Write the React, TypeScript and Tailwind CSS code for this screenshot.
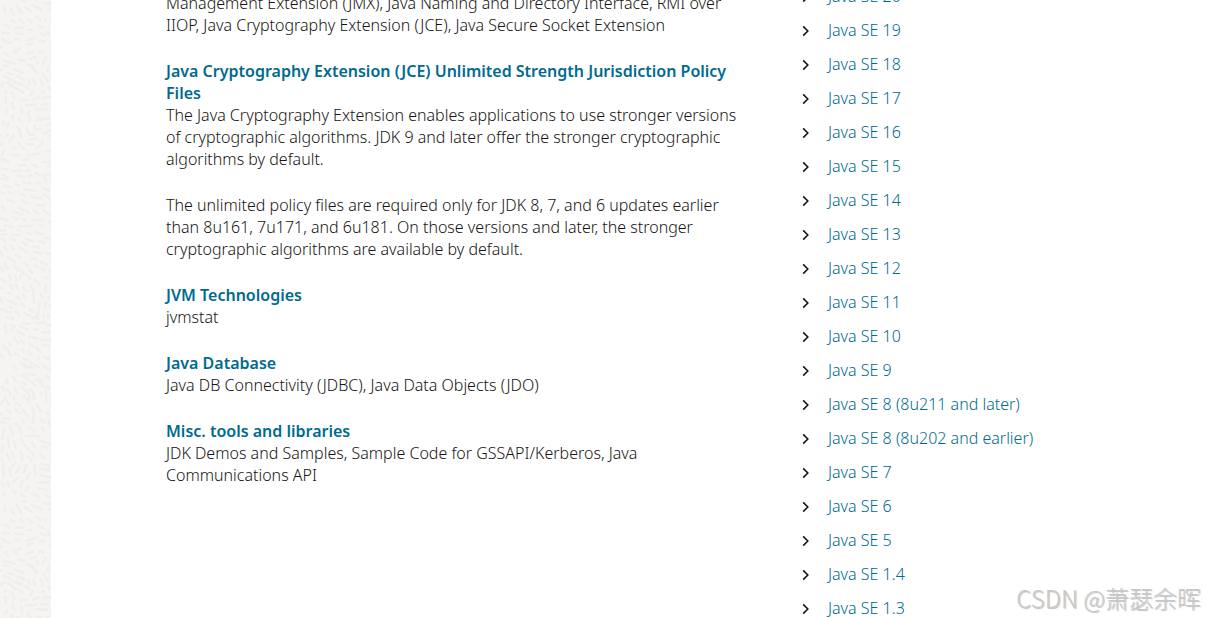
import React from "react";

type Topic = { title?: string; paragraphs: string[] };

const topics: Topic[] = [
  {
    paragraphs: [
      "Management Extension (JMX), Java Naming and Directory Interface, RMI over IIOP, Java Cryptography Extension (JCE), Java Secure Socket Extension",
    ],
  },
  {
    title: "Java Cryptography Extension (JCE) Unlimited Strength Jurisdiction Policy Files",
    paragraphs: [
      "The Java Cryptography Extension enables applications to use stronger versions of cryptographic algorithms. JDK 9 and later offer the stronger cryptographic algorithms by default.",
      "The unlimited policy files are required only for JDK 8, 7, and 6 updates earlier than 8u161, 7u171, and 6u181. On those versions and later, the stronger cryptographic algorithms are available by default.",
    ],
  },
  { title: "JVM Technologies", paragraphs: ["jvmstat"] },
  {
    title: "Java Database",
    paragraphs: ["Java DB Connectivity (JDBC), Java Data Objects (JDO)"],
  },
  {
    title: "Misc. tools and libraries",
    paragraphs: [
      "JDK Demos and Samples, Sample Code for GSSAPI/Kerberos, Java Communications API",
    ],
  },
];

const releases = [
  "20", "19", "18", "17", "16", "15", "14", "13", "12", "11", "10", "9",
  "8 (8u211 and later)", "8 (8u202 and earlier)", "7", "6", "5", "1.4", "1.3",
];

// One tile of the margin texture, drawn at three units per pixel.
const strokes = [
  "M14 16L15 40M32 24L42 45M49 12L66 42M62 0L80 5M72 20L95 35M92 13L128 30M108 0L115 2M130 10L153 11M145 22L150 32",
  "M30 60L46 67M58 56L72 70M84 56L98 70M108 48L124 62M132 55L138 64M10 73L30 81M0 70L2 76M44 84L72 83M114 76L132 86M142 92L150 106",
  "M80 90L98 89M6 98L30 100M44 101L72 102M120 101Q134 103 140 108M4 114Q14 128 36 129M42 117L62 120M78 124L110 112M116 122L136 125M80 135L100 129M150 130L153 140",
  "M64 144L42 152Q40 158 52 160M76 162Q88 156 104 157M114 154L134 157M12 156L26 168M0 136L6 146M52 176Q62 183 78 182M88 177L110 170M112 182L114 196M138 170L127 196",
  "M8 182Q24 184 48 193M10 196L28 198M78 192Q96 196 108 220M92 192L114 220M40 208L72 220M145 198L141 216M0 208L8 212M20 218L42 224M128 218L144 244M8 226L36 240M50 228L76 240",
  "M84 236L90 256M100 236L106 260M122 234L128 260M38 244L70 256M4 248Q30 246 42 264Q62 268 72 280M74 258L90 268M0 252L10 262M17 268L18 278M100 268L90 290M122 278L136 272M144 258L150 268M32 274Q40 284 44 298",
  "M16 288L18 312M60 302L82 298M96 300L120 290M128 296Q138 290 153 292M38 304Q36 320 44 330M74 316L112 314M122 315L146 311M62 318Q68 330 66 344M22 326L16 344M90 332L80 350M106 328L144 329M112 354L124 348",
  "M36 342L40 362M54 350Q58 364 68 368M92 346L86 366M104 362L150 354M14 362L8 376M28 366L18 388M108 376Q98 382 106 388L126 386M138 376L153 372M48 376Q62 390 62 416M82 382Q80 400 90 404L106 403M130 402L153 388M0 402L4 410",
  "M26 400L18 410M42 404L26 428M84 418L114 416M144 408L153 407M8 424L2 440M54 426Q62 444 76 446M76 432L102 434M130 420Q122 438 106 446M36 440L50 448M16 446L4 468M32 464L60 466M80 466L120 460M136 456L153 452M64 478L88 478M0 478L18 479",
  "M8 482L28 484M54 496L80 495M92 493L116 502M128 484L150 488M2 505L26 510M36 513L68 513M76 512L92 512M142 500L153 495M102 518L124 528M6 522Q14 528 28 536M50 526L76 532M84 530L98 526M134 522L153 523",
  "M0 535L24 540M8 554L36 564M44 550L60 558M68 546L98 552M106 546L124 550M132 524L138 548M70 568L110 572M124 562L150 572M36 584L24 574M60 580L78 590M128 580L150 595M90 590L126 596M0 578L16 582",
  "M4 616L15 632M18 598L46 608M64 600L84 612M54 622L92 640M98 628L116 644M110 615L138 617M128 628L152 648M34 634L70 644M2 654L26 664M34 650L56 658M94 660L132 661M66 660L80 658M144 664L153 668",
  "M12 676L42 681M56 679L98 677M116 672L132 680M0 691L18 691M50 691L64 690M0 704L22 704M34 704L62 706M76 698L98 704M102 696L134 704M2 712L18 728M30 716L48 722M74 716L102 724M114 722L138 730M134 714L153 716",
  "M62 724L84 736M28 734L44 750M98 738L120 742M10 738L22 750M54 740L84 758M0 752L10 770M100 754L126 762M136 760L153 760M44 762L66 776M20 770L48 786M92 774L114 778M120 784L144 796M12 790L24 808M70 786L86 800",
  "M38 796L58 814M100 794L116 802M122 806L136 812M0 800L14 814M62 808L74 826M86 806L98 822M146 808L153 820M28 820L32 842M44 824L50 844M62 824L60 838M78 822L94 840M0 836L20 848M100 838L122 854M132 830L146 836",
  "M30 850L38 870M46 850L56 870M66 860L82 876M92 854Q104 880 102 912M136 850L138 880M0 862L10 866M22 878L36 884M68 880L76 894M44 888L64 896M120 878L130 896M148 886L144 900M0 890L8 910M20 900L50 914M62 910L76 920",
  "M118 906Q120 930 108 956M136 904L136 930M28 918L38 926M146 918L153 920M0 926L36 940M86 926L102 938M46 932L60 950M70 938L90 948M146 944L142 956M132 940L130 954M16 953L44 956M94 952L118 956M66 970L92 972M106 970L138 968",
  "M14 974L20 1002M28 974L48 982M56 976L86 992M140 978L153 974M98 989L118 989M36 984L36 996M46 992L76 1006M124 998L150 996M84 1010L116 1016M122 1022L153 1018M40 1010L56 1032M24 1024L32 1038M60 1018L74 1034M124 1035L148 1036M84 1028L100 1042",
  "M8 1034L16 1046M20 1044L34 1070M66 1046L72 1058M108 1040L124 1060M42 1060L60 1068M84 1050L94 1068M0 1060L10 1076M68 1074L84 1082M112 1070L118 1080M130 1072L150 1078",
  "M36 1094L50 1108M60 1088L84 1108M66 1092L102 1106M90 1088L120 1102M126 1094L153 1112M74 1122L108 1124M20 1134L22 1152M38 1128L48 1146M64 1124L88 1142M104 1138L132 1140M136 1122L148 1138M62 1144L78 1156M92 1142L108 1160",
  "M4 1156L14 1174M22 1166L34 1190M42 1162L52 1180M62 1160L82 1178M88 1164L104 1184M114 1138L130 1160M136 1156L150 1170M12 1184L20 1202M44 1186L40 1202M68 1186L84 1202M82 1168L90 1202M96 1182L106 1200M118 1176L128 1184M136 1168L140 1204",
  "M10 1196L4 1216M20 1202L30 1218M44 1206L64 1218M82 1202L90 1214M108 1212L124 1238M94 1218L102 1236M18 1230L36 1238M44 1224L62 1244M66 1226L84 1252M0 1236L6 1248M102 1230L98 1272M138 1234L146 1248M8 1256L32 1256M64 1256L74 1270",
  "M118 1252L136 1272M0 1266L20 1270M48 1268L52 1280M84 1280L106 1296M30 1276L38 1308M14 1284L6 1320M56 1278L66 1306M124 1280L134 1294M146 1260L150 1280M76 1308L120 1308M116 1316Q126 1328 153 1332M22 1308L28 1344M40 1320L48 1346",
  "M62 1316L78 1342M94 1324L106 1344M10 1332L4 1358M122 1338L146 1344M82 1344L90 1356M34 1356L44 1374M62 1350L68 1386M18 1358L30 1382M94 1356L106 1372M118 1362L138 1378M4 1374L10 1386M82 1366L96 1384M122 1392L150 1398",
  "M14 1388Q6 1410 12 1432M48 1386L34 1404M62 1400L46 1422M80 1392L70 1420M104 1394L106 1430M118 1406L150 1412M28 1402L34 1430M90 1416L80 1440M56 1430L38 1450M118 1426L153 1432M4 1446L12 1462M70 1440L60 1462M22 1444L30 1462M110 1446L150 1448",
  "M90 1456L74 1474M36 1470L50 1484M8 1476L18 1490M110 1464L142 1470M62 1482L78 1492M96 1480L120 1490M134 1484L150 1492",
];

function MarginTexture() {
  return (
    <svg className="h-full w-full" aria-hidden="true">
      <defs>
        <pattern
          id="strokes"
          width="153"
          height="1500"
          patternUnits="userSpaceOnUse"
          patternTransform="scale(0.33333)"
        >
          {strokes.map((d) => (
            <path key={d} d={d} fill="none" stroke="#efeeeb" strokeWidth="8" />
          ))}
        </pattern>
      </defs>
      <rect width="100%" height="100%" fill="url(#strokes)" />
    </svg>
  );
}

function Chevron() {
  return (
    <svg viewBox="0 0 8 12" className="mt-0.5 h-3 w-2 shrink-0" aria-hidden="true">
      <path d="M1.2 1.4L5.8 6L1.2 10.6" fill="none" stroke="#161513" strokeWidth="1.6" />
    </svg>
  );
}

export default function App() {
  return (
    <div className="relative flex h-screen overflow-hidden bg-white font-['Noto_Sans',sans-serif] text-base font-light text-[#161513]">
      <div className="w-[51px] shrink-0 bg-[#f5f4f2]">
        <MarginTexture />
      </div>

      <div className="flex min-w-0 flex-1 items-start pl-[115px]">
        <main className="-mt-2 flex w-1/2 max-w-[574px] shrink-0 grow flex-col gap-6 leading-[22px]">
          {topics.map((topic) => (
            <section key={topic.paragraphs[0]} className="flex flex-col">
              {topic.title && (
                <h3 className="font-semibold text-[#006b8f]">
                  <a href="#">{topic.title}</a>
                </h3>
              )}
              <div className="flex flex-col gap-6">
                {topic.paragraphs.map((text) => (
                  <p key={text}>{text}</p>
                ))}
              </div>
            </section>
          ))}
        </main>

        <nav aria-label="Java SE releases" className="-mt-[21px] ml-[62px] min-w-0">
          <ul>
            {releases.map((release) => (
              <li key={release} className="flex h-[34px] items-center gap-[18px]">
                <Chevron />
                <a href="#" className="whitespace-nowrap text-[#006b8f]">
                  Java SE {release}
                </a>
              </li>
            ))}
          </ul>
        </nav>
      </div>

      <div className="absolute right-1 bottom-1 font-['Noto_Sans_CJK_SC',sans-serif] text-2xl leading-8 font-light whitespace-nowrap text-[#c9c9c9] [text-shadow:1px_1px_1px_#bdbdbd]">
        CSDN @萧瑟余晖
      </div>
    </div>
  );
}
